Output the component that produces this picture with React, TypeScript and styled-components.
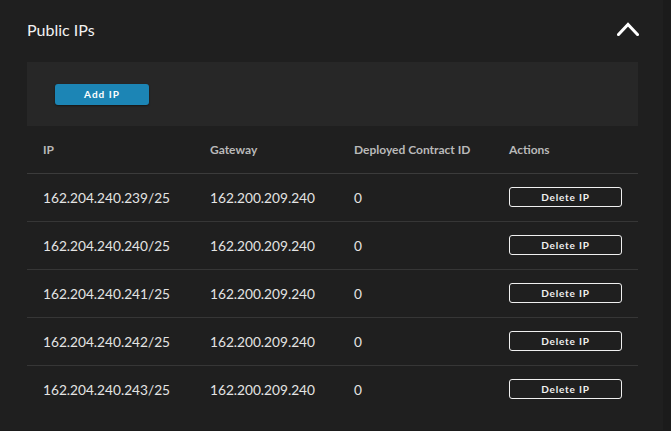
import React from "react";
import styled, { createGlobalStyle } from "styled-components";

interface PublicIp {
  ip: string;
  gateway: string;
  contractId: number;
}

const ips: PublicIp[] = [
  { ip: "162.204.240.239/25", gateway: "162.200.209.240", contractId: 0 },
  { ip: "162.204.240.240/25", gateway: "162.200.209.240", contractId: 0 },
  { ip: "162.204.240.241/25", gateway: "162.200.209.240", contractId: 0 },
  { ip: "162.204.240.242/25", gateway: "162.200.209.240", contractId: 0 },
  { ip: "162.204.240.243/25", gateway: "162.200.209.240", contractId: 0 },
];

export default function App() {
  return (
    <>
      <GlobalStyle />
      <Page>
        <Card>
          <CardHeader>
            <Title>Public IPs</Title>
            <CollapseButton type="button" aria-label="Collapse">
              <svg width="22" height="14" viewBox="0 0 22 14" fill="none">
                <path
                  d="M1.5 12.5 L11 2.5 L20.5 12.5"
                  stroke="#ffffff"
                  strokeWidth="3"
                  strokeLinecap="square"
                />
              </svg>
            </CollapseButton>
          </CardHeader>

          <Toolbar>
            <AddButton type="button">Add IP</AddButton>
          </Toolbar>

          <Table>
            <thead>
              <tr>
                <HeadCell $width={167}>IP</HeadCell>
                <HeadCell $width={144}>Gateway</HeadCell>
                <HeadCell $width={155}>Deployed Contract ID</HeadCell>
                <HeadCell>Actions</HeadCell>
              </tr>
            </thead>
            <tbody>
              {ips.map((row) => (
                <Row key={row.ip}>
                  <Cell>{row.ip}</Cell>
                  <Cell>{row.gateway}</Cell>
                  <Cell>{row.contractId}</Cell>
                  <Cell>
                    <DeleteButton type="button">Delete IP</DeleteButton>
                  </Cell>
                </Row>
              ))}
            </tbody>
          </Table>
        </Card>
      </Page>
    </>
  );
}

const GlobalStyle = createGlobalStyle`
  html, body {
    margin: 0;
    padding: 0;
    background: #1b1b1b;
    font-family: Lato, "Open Sans", sans-serif;
  }
`;

const Page = styled.div`
  width: 671px;
  height: 431px;
  overflow: hidden;
  background: #1b1b1b;
`;

const Card = styled.div`
  width: 663px;
  height: 430px;
  background: #1f1f1f;
  padding: 0 25px 0 27px;
  box-sizing: border-box;
`;

const CardHeader = styled.div`
  display: flex;
  align-items: center;
  justify-content: space-between;
  height: 62px;
`;

const Title = styled.h2`
  margin: 0;
  font-size: 16px;
  font-weight: 400;
  color: #f2f2f2;
  padding-bottom: 3px;
`;

const CollapseButton = styled.button`
  display: flex;
  padding: 0;
  margin-right: -1px;
  margin-bottom: 4px;
  border: none;
  background: none;
  cursor: pointer;
`;

const Toolbar = styled.div`
  display: flex;
  align-items: center;
  height: 64px;
  padding-left: 28px;
  background: #272727;
`;

const AddButton = styled.button`
  width: 94px;
  height: 21px;
  padding: 0;
  border: none;
  border-radius: 3px;
  background: #1c85b5;
  box-shadow: 0 1px 2px rgba(0, 0, 0, 0.45);
  color: #ffffff;
  font-family: Lato, sans-serif;
  font-size: 10px;
  font-weight: 700;
  letter-spacing: 1px;
  cursor: pointer;
`;

const Table = styled.table`
  width: 100%;
  border-collapse: collapse;
  table-layout: fixed;
`;

const HeadCell = styled.th<{ $width?: number }>`
  width: ${(props) => (props.$width ? `${props.$width}px` : "auto")};
  height: 47px;
  padding: 0 0 0 16px;
  text-align: left;
  font-size: 12px;
  font-weight: 700;
  color: #b9b9b9;
  border-bottom: 1px solid #3b3b3b;
  box-sizing: border-box;
`;

const Row = styled.tr`
  & + & td {
    border-top: 1px solid #363636;
  }
`;

const Cell = styled.td`
  height: 48px;
  padding: 0 0 0 16px;
  font-size: 13.7px;
  color: #e4e4e4;
  box-sizing: border-box;
`;

const DeleteButton = styled.button`
  display: block;
  width: 113px;
  height: 20px;
  padding: 0;
  border: 1.5px solid #f0f0f0;
  border-radius: 3px;
  background: transparent;
  color: #f0f0f0;
  font-family: Lato, sans-serif;
  font-size: 10px;
  font-weight: 700;
  letter-spacing: 0.8px;
  cursor: pointer;
`;
